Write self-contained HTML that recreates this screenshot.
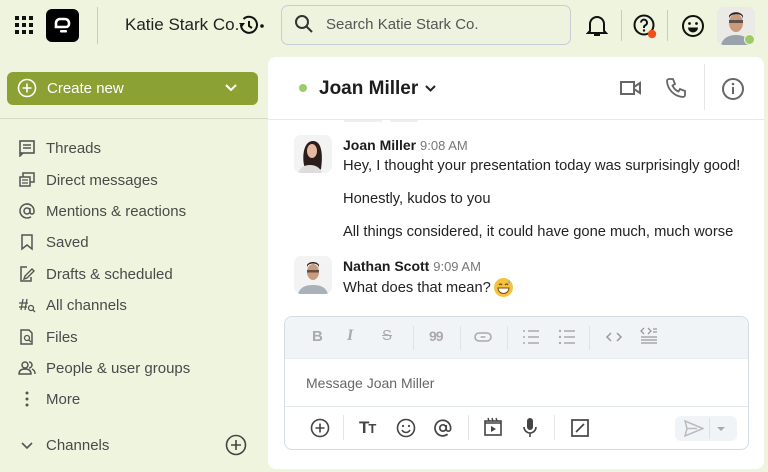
<!DOCTYPE html>
<html><head><meta charset="utf-8"><style>
*{box-sizing:border-box;margin:0;padding:0}
body{width:768px;height:472px;overflow:hidden;background:#eff4de;font-family:"Liberation Sans",sans-serif;position:relative;color:#1d1d1d}
.a{position:absolute}
svg{display:block}
.nav{position:absolute;left:18px;font-size:15px;color:#4a4a4a;display:flex;align-items:center}
.nav svg{width:18px;height:18px;margin-right:10px}
.m{font-size:14.7px;color:#222}
</style></head><body>
<svg class="a" style="left:14px;top:15px" width="20" height="20" viewBox="0 0 20 20" fill="#111"><rect x="1" y="1" width="4" height="4"/><rect x="8" y="1" width="4" height="4"/><rect x="15" y="1" width="4" height="4"/><rect x="1" y="8" width="4" height="4"/><rect x="8" y="8" width="4" height="4"/><rect x="15" y="8" width="4" height="4"/><rect x="1" y="15" width="4" height="4"/><rect x="8" y="15" width="4" height="4"/><rect x="15" y="15" width="4" height="4"/></svg>
<div class="a" style="left:46px;top:9px;width:33px;height:33px;background:#000;border-radius:6px"><svg width="33" height="33" viewBox="0 0 33 33"><path d="M10 18V14a4 4 0 0 1 4-4h5a4 4 0 0 1 4 4v1a3 3 0 0 1-3 3z" fill="none" stroke="#fff" stroke-width="2.6"/><rect x="14" y="21" width="7" height="2.5" rx="1" fill="#fff"/></svg></div>
<div class="a" style="left:97px;top:7px;width:1px;height:37px;background:#c7cdbd"></div>
<div class="a" style="left:125px;top:15px;font-size:17px;color:#222">Katie Stark Co.</div>
<svg class="a" style="left:238px;top:14px" width="28" height="22" viewBox="0 0 28 22"><path d="M3 11a8 8 0 1 0 2.5-6" fill="none" stroke="#111" stroke-width="2"/><path d="M1 9l3 4 3-4" fill="#111"/><path d="M11 7v5l3 2" stroke="#111" stroke-width="2" fill="none"/><circle cx="24" cy="12" r="1.8" fill="#111"/></svg>
<div class="a" style="left:281px;top:5px;width:290px;height:40px;border:1.5px solid #c5ced6;border-radius:7px;background:#eef3df"></div>
<svg class="a" style="left:294px;top:14px" width="20" height="20" viewBox="0 0 20 20"><circle cx="8" cy="8" r="6" fill="none" stroke="#333" stroke-width="2"/><path d="M12.5 12.5L18 18" stroke="#333" stroke-width="2"/></svg>
<div class="a" style="left:326px;top:16px;font-size:15px;color:#555">Search Katie Stark Co.</div>
<svg class="a" style="left:586px;top:14px" width="22" height="24" viewBox="0 0 22 24"><path d="M4 17V10a7 7 0 0 1 14 0v7l2 2H2z" fill="none" stroke="#111" stroke-width="2"/><path d="M8 21h6" stroke="#111" stroke-width="2"/></svg>
<div class="a" style="left:621px;top:10px;width:1px;height:31px;background:#c7cdbd"></div>
<svg class="a" style="left:633px;top:13px" width="26" height="26" viewBox="0 0 26 26"><circle cx="11" cy="12" r="9.5" fill="none" stroke="#111" stroke-width="2"/><path d="M8 9.5a3 3 0 1 1 4 3c-1 .5-1 1-1 2.5" fill="none" stroke="#111" stroke-width="2"/><circle cx="11" cy="17.5" r="1.2" fill="#111"/><circle cx="19" cy="21" r="4.2" fill="#f0501e"/></svg>
<div class="a" style="left:667px;top:10px;width:1px;height:31px;background:#c7cdbd"></div>
<svg class="a" style="left:681px;top:14px" width="24" height="24" viewBox="0 0 24 24"><circle cx="12" cy="12" r="10" fill="none" stroke="#111" stroke-width="2"/><circle cx="8.5" cy="9.5" r="1.4" fill="#111"/><circle cx="15.5" cy="9.5" r="1.4" fill="#111"/><path d="M7 13.5h10a5 5 0 0 1-10 0z" fill="#111"/></svg>
<div class="a" style="left:717px;top:7px;width:38px;height:38px;border-radius:7px;background:#d9dbd8;overflow:hidden"><svg width="38" height="38" viewBox="0 0 38 38"><rect width="38" height="38" fill="#eceae6"/><path d="M4 38c2-8 9-10 15-10s13 2 15 10z" fill="#9aa3ad"/><ellipse cx="19" cy="16" rx="7" ry="9" fill="#c99a7c"/><path d="M12 12c0-6 14-7 14 0v-3c-2-5-12-5-14 0z" fill="#2a2522"/><rect x="12" y="13" width="14" height="3" fill="#333" opacity=".7"/></svg></div>
<div class="a" style="left:744px;top:34px;width:11px;height:11px;border-radius:50%;background:#9ccc65;border:1.5px solid #eff4de"></div>

<div class="a" style="left:7px;top:72px;width:251px;height:33px;background:#8ba134;border-radius:6px"></div>
<svg class="a" style="left:17px;top:78px" width="20" height="20" viewBox="0 0 20 20"><circle cx="10" cy="10" r="8.5" fill="none" stroke="#fff" stroke-width="1.6"/><path d="M10 5.5v9M5.5 10h9" stroke="#fff" stroke-width="1.6"/></svg>
<div class="a" style="left:47px;top:80px;font-size:15px;color:#fff">Create new</div>
<svg class="a" style="left:224px;top:83px" width="14" height="10" viewBox="0 0 14 10"><path d="M2 2l5 5 5-5" fill="none" stroke="#fff" stroke-width="2"/></svg>
<div class="a" style="left:0;top:118px;width:268px;height:1px;background:#d6dccb"></div>

<div class="nav" style="top:139px"><svg viewBox="0 0 18 18"><rect x="2" y="2" width="14" height="12" fill="none" stroke="#555" stroke-width="1.6"/><path d="M5 6h8M5 9h8M2 14l0 3 3-3" stroke="#555" stroke-width="1.5" fill="none"/></svg>Threads</div>
<div class="nav" style="top:171px"><svg viewBox="0 0 18 18"><rect x="5" y="2" width="11" height="9" fill="none" stroke="#555" stroke-width="1.5"/><rect x="2" y="6" width="10" height="9" fill="#eff4de" stroke="#555" stroke-width="1.5"/><path d="M4 9h6M4 12h6" stroke="#555" stroke-width="1.3"/></svg>Direct messages</div>
<div class="nav" style="top:202px"><svg viewBox="0 0 18 18"><circle cx="9" cy="9" r="3" fill="none" stroke="#555" stroke-width="1.5"/><path d="M12 6v4a2 2 0 0 0 4 0V9a7 7 0 1 0-3 5.7" fill="none" stroke="#555" stroke-width="1.5"/></svg>Mentions &amp; reactions</div>
<div class="nav" style="top:233px"><svg viewBox="0 0 18 18"><path d="M4 2h10v14l-5-4-5 4z" fill="none" stroke="#555" stroke-width="1.5"/></svg>Saved</div>
<div class="nav" style="top:265px"><svg viewBox="0 0 18 18"><path d="M9 2H3v14h10v-4" fill="none" stroke="#555" stroke-width="1.5"/><path d="M6 14l1-3 7-7 2 2-7 7z" fill="none" stroke="#555" stroke-width="1.4"/></svg>Drafts &amp; scheduled</div>
<div class="nav" style="top:296px"><svg viewBox="0 0 18 18"><path d="M5 3l-2 11M9 3l-2 11M1 7h9M1 11h8" stroke="#555" stroke-width="1.3" fill="none"/><circle cx="13" cy="12" r="2.5" fill="none" stroke="#555" stroke-width="1.3"/><path d="M15 14l2 2" stroke="#555" stroke-width="1.3"/></svg>All channels</div>
<div class="nav" style="top:328px"><svg viewBox="0 0 18 18"><path d="M11 2H3v14h11V5z" fill="none" stroke="#555" stroke-width="1.5"/><circle cx="9" cy="10" r="2.5" fill="none" stroke="#555" stroke-width="1.3"/><path d="M11 12l2 2" stroke="#555" stroke-width="1.3"/></svg>Files</div>
<div class="nav" style="top:359px"><svg viewBox="0 0 18 18"><circle cx="7" cy="6" r="3" fill="none" stroke="#555" stroke-width="1.5"/><path d="M1 15c0-4 3-5 6-5s6 1 6 5z" fill="none" stroke="#555" stroke-width="1.5"/><path d="M11 3a3 3 0 0 1 0 6M14 10c2 1 3 2 3 5" fill="none" stroke="#555" stroke-width="1.5"/></svg>People &amp; user groups</div>
<div class="nav" style="top:390px"><svg viewBox="0 0 18 18"><circle cx="9" cy="3" r="1.5" fill="#555"/><circle cx="9" cy="9" r="1.5" fill="#555"/><circle cx="9" cy="15" r="1.5" fill="#555"/></svg>More</div>
<div class="nav" style="top:436px"><svg viewBox="0 0 18 18"><path d="M4 7l5 5 5-5" fill="none" stroke="#555" stroke-width="1.6"/></svg>Channels</div>
<svg class="a" style="left:225px;top:434px" width="22" height="22" viewBox="0 0 22 22"><circle cx="11" cy="11" r="9.5" fill="none" stroke="#444" stroke-width="1.6"/><path d="M11 6v10M6 11h10" stroke="#444" stroke-width="1.6"/></svg>

<div class="a" style="left:268px;top:57px;width:496px;height:412px;background:#fff;border-radius:8px"></div>
<div class="a" style="left:299px;top:84px;width:8px;height:8px;border-radius:50%;background:#9ccc65"></div>
<div class="a" style="left:319px;top:78px;font-size:19px;font-weight:bold;color:#1d1d1d">Joan Miller</div>
<svg class="a" style="left:424px;top:84px" width="13" height="10" viewBox="0 0 13 10"><path d="M2 2l4.5 4.5L11 2" fill="none" stroke="#222" stroke-width="2"/></svg>
<svg class="a" style="left:620px;top:79px" width="22" height="18" viewBox="0 0 22 18"><rect x="1" y="3" width="13" height="12" fill="none" stroke="#666" stroke-width="2"/><path d="M14 8l6-4v10l-6-4z" fill="none" stroke="#666" stroke-width="2"/></svg>
<svg class="a" style="left:665px;top:77px" width="22" height="22" viewBox="0 0 22 22"><path d="M4 2h4l2 5-2.5 1.5a11 11 0 0 0 6 6L15 12l5 2v4a2 2 0 0 1-2 2A17 17 0 0 1 2 4a2 2 0 0 1 2-2z" fill="none" stroke="#666" stroke-width="1.8"/></svg>
<div class="a" style="left:704px;top:64px;width:1px;height:46px;background:#e3e6e9"></div>
<svg class="a" style="left:721px;top:77px" width="24" height="24" viewBox="0 0 24 24"><circle cx="12" cy="12" r="10" fill="none" stroke="#666" stroke-width="2"/><path d="M12 10v7" stroke="#666" stroke-width="2"/><circle cx="12" cy="7" r="1.3" fill="#666"/></svg>
<div class="a" style="left:268px;top:119px;width:496px;height:1px;background:#e6eaee"></div>
<div class="a" style="left:344px;top:120px;width:38px;height:2px;background:#eef0f2"></div>
<div class="a" style="left:390px;top:120px;width:28px;height:2px;background:#eef0f2"></div>

<div class="a" style="left:294px;top:135px;width:38px;height:38px;border-radius:7px;overflow:hidden;background:#f3f3f3"><svg width="38" height="38" viewBox="0 0 38 38"><path d="M10 30c-2-10 0-24 9-24s10 14 8 28l-4 4H13z" fill="#2b1e1a"/><ellipse cx="18" cy="16" rx="5" ry="7" fill="#e4b9a0"/><path d="M4 38c2-6 7-8 12-8s10 2 12 8z" fill="#ddd"/></svg></div>
<div class="a" style="left:343px;top:137px;font-size:14px"><b>Joan Miller</b> <span style="font-size:13px;color:#777">9:08 AM</span></div>
<div class="a m" style="left:343px;top:158px">Hey, I thought your presentation today was surprisingly good!</div>
<div class="a m" style="left:343px;top:191px">Honestly, kudos to you</div>
<div class="a m" style="left:343px;top:224px">All things considered, it could have gone much, much worse</div>
<div class="a" style="left:294px;top:256px;width:38px;height:38px;border-radius:7px;overflow:hidden;background:#f3f3f3"><svg width="38" height="38" viewBox="0 0 38 38"><path d="M4 38c2-7 8-9 15-9s13 2 15 9z" fill="#a9b1b9"/><ellipse cx="19" cy="16" rx="6" ry="8" fill="#c99a7c"/><path d="M13 12c0-6 12-6 12 0v-3c-2-4-10-4-12 0z" fill="#2a2522"/><rect x="13" y="14" width="12" height="2.5" fill="#333" opacity=".7"/></svg></div>
<div class="a" style="left:343px;top:258px;font-size:14px"><b>Nathan Scott</b> <span style="font-size:13px;color:#777">9:09 AM</span></div>
<div class="a m" style="left:343px;top:280px">What does that mean?</div>
<svg class="a" style="left:493px;top:277px" width="21" height="21" viewBox="0 0 21 21"><circle cx="10.5" cy="10.5" r="9.5" fill="#f7c23b"/><path d="M5 11h11a5.5 5.5 0 0 1-11 0z" fill="#fff" stroke="#7a4a10" stroke-width="1"/><path d="M6 8q1.5-2 3 0M12 8q1.5-2 3 0" stroke="#7a4a10" stroke-width="1.2" fill="none"/><path d="M16 3q2 3 0 4q-2-1 0-4z" fill="#6fb7ea"/></svg>

<div class="a" style="left:284px;top:316px;width:465px;height:134px;border:1px solid #d3dbe3;border-radius:8px;overflow:hidden;background:#fff">
 <div style="height:42px;background:#f1f4f7;border-bottom:1px solid #e7ecf0"></div>
 <div style="position:absolute;left:21px;top:58px;font-size:14px;color:#666">Message Joan Miller</div>
 <div style="position:absolute;left:0;top:89px;width:100%;height:1px;background:#e3e8ed"></div>
</div>
<div class="a" style="left:312px;top:328px;font-size:15px;font-weight:bold;color:#aaa">B</div>
<div class="a" style="left:347px;top:327px;font-size:16px;font-style:italic;color:#aaa;font-family:'Liberation Serif',serif;font-weight:bold">I</div>
<div class="a" style="left:382px;top:327px;font-size:15px;color:#aaa;text-decoration:line-through">S</div>
<div class="a" style="left:413px;top:326px;width:1px;height:24px;background:#dfe3e7"></div>
<div class="a" style="left:429px;top:328px;font-size:14px;font-weight:bold;color:#aaa;letter-spacing:-1px">99</div>
<div class="a" style="left:460px;top:326px;width:1px;height:24px;background:#dfe3e7"></div>
<svg class="a" style="left:474px;top:331px" width="18" height="12" viewBox="0 0 18 12"><rect x="1" y="2" width="16" height="8" rx="4" fill="none" stroke="#aaa" stroke-width="1.6"/><path d="M6 6h6" stroke="#fff" stroke-width="3"/><path d="M6.5 6h5" stroke="#aaa" stroke-width="1.6"/></svg>
<div class="a" style="left:507px;top:326px;width:1px;height:24px;background:#dfe3e7"></div>
<svg class="a" style="left:522px;top:329px" width="18" height="16" viewBox="0 0 18 16"><path d="M6 2h11M6 8h11M6 14h11M1 2h2M1 8h2M1 14h2" stroke="#aaa" stroke-width="1.4"/></svg>
<svg class="a" style="left:558px;top:329px" width="18" height="16" viewBox="0 0 18 16"><path d="M6 2h11M6 8h11M6 14h11" stroke="#aaa" stroke-width="1.4"/><circle cx="2" cy="2" r="1.2" fill="#aaa"/><circle cx="2" cy="8" r="1.2" fill="#aaa"/><circle cx="2" cy="14" r="1.2" fill="#aaa"/></svg>
<div class="a" style="left:589px;top:326px;width:1px;height:24px;background:#dfe3e7"></div>
<svg class="a" style="left:605px;top:331px" width="18" height="12" viewBox="0 0 18 12"><path d="M6 2L2 6l4 4M12 2l4 4-4 4" fill="none" stroke="#999" stroke-width="1.5"/></svg>
<svg class="a" style="left:640px;top:327px" width="18" height="18" viewBox="0 0 18 18"><path d="M4 1L1 4l3 3M8 1l3 3-3 3M13 2h4M13 5h4M1 10h16M1 13h16M1 16h16" fill="none" stroke="#999" stroke-width="1.3"/></svg>

<svg class="a" style="left:310px;top:418px" width="20" height="20" viewBox="0 0 20 20"><circle cx="10" cy="10" r="8.5" fill="none" stroke="#444" stroke-width="1.6"/><path d="M10 5.5v9M5.5 10h9" stroke="#444" stroke-width="1.6"/></svg>
<div class="a" style="left:343px;top:415px;width:1px;height:25px;background:#e3e6e9"></div>
<div class="a" style="left:359px;top:418px;font-size:17px;font-weight:bold;color:#444;letter-spacing:-1px">T<span style="font-size:13px">T</span></div>
<svg class="a" style="left:396px;top:418px" width="20" height="20" viewBox="0 0 20 20"><circle cx="10" cy="10" r="8.5" fill="none" stroke="#444" stroke-width="1.6"/><circle cx="7" cy="8" r="1.1" fill="#444"/><circle cx="13" cy="8" r="1.1" fill="#444"/><path d="M6 12a4.5 4.5 0 0 0 8 0" fill="none" stroke="#444" stroke-width="1.5"/></svg>
<svg class="a" style="left:433px;top:418px" width="20" height="20" viewBox="0 0 20 20"><circle cx="10" cy="10" r="3.2" fill="none" stroke="#444" stroke-width="1.7"/><path d="M13.2 7v4a2.2 2.2 0 0 0 4.4 0V10a7.8 7.8 0 1 0-3 6.2" fill="none" stroke="#444" stroke-width="1.7"/></svg>
<div class="a" style="left:468px;top:415px;width:1px;height:25px;background:#e3e6e9"></div>
<svg class="a" style="left:483px;top:417px" width="20" height="20" viewBox="0 0 20 20"><rect x="2" y="4" width="16" height="14" fill="none" stroke="#444" stroke-width="1.6"/><path d="M5 1l1 3M9 1l1 3M13 1l1 3M2 6h16" stroke="#444" stroke-width="1.4"/><path d="M8 9v6l5-3z" fill="#444"/></svg>
<svg class="a" style="left:522px;top:417px" width="16" height="22" viewBox="0 0 16 22"><rect x="5" y="1" width="6" height="12" rx="3" fill="#444"/><path d="M2 10a6 6 0 0 0 12 0M8 16v4" fill="none" stroke="#444" stroke-width="1.6"/></svg>
<div class="a" style="left:554px;top:415px;width:1px;height:25px;background:#e3e6e9"></div>
<svg class="a" style="left:570px;top:418px" width="20" height="20" viewBox="0 0 20 20"><rect x="2" y="2" width="16" height="16" fill="none" stroke="#444" stroke-width="1.7"/><path d="M6 14l8-8" stroke="#444" stroke-width="1.7"/></svg>
<div class="a" style="left:675px;top:416px;width:62px;height:25px;border-radius:6px;background:#f1f4f7"></div>
<svg class="a" style="left:684px;top:420px" width="20" height="17" viewBox="0 0 20 17"><path d="M1 1l18 7.5L1 16l2-7.5z M3 8.5h10" fill="none" stroke="#bbb" stroke-width="1.5"/></svg>
<div class="a" style="left:709px;top:418px;width:1px;height:21px;background:#dde2e6"></div>
<svg class="a" style="left:716px;top:426px" width="10" height="6" viewBox="0 0 10 6"><path d="M1 1h8L5 5z" fill="#aaa"/></svg>
</body></html>
